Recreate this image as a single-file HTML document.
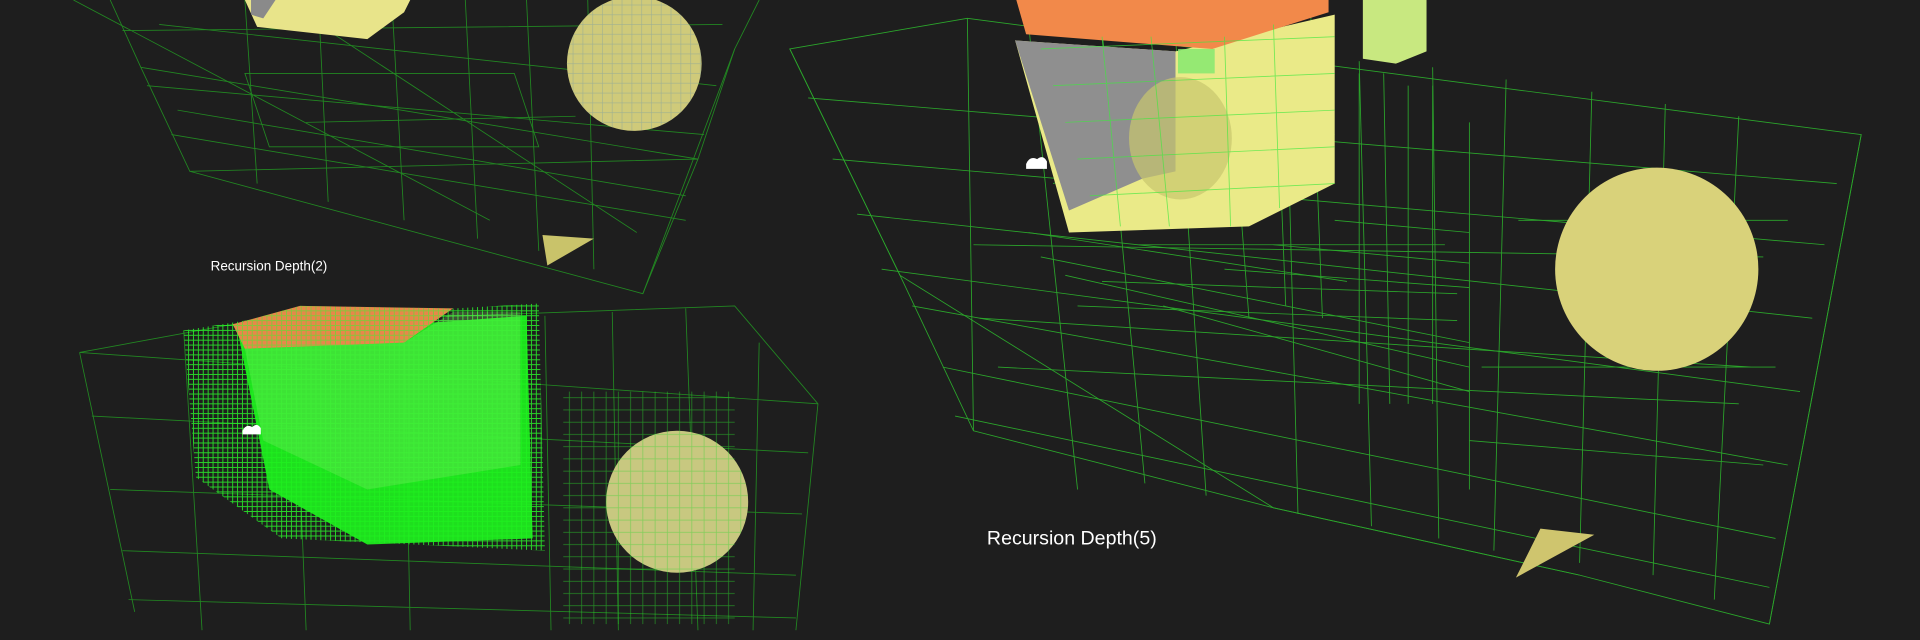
<!DOCTYPE html>
<html><head><meta charset="utf-8"><style>
html,body{margin:0;padding:0;background:#1e1e1e;width:1920px;height:640px;overflow:hidden}
svg{display:block}
text{font-family:"Liberation Sans",sans-serif;fill:#fff}
</style></head><body>
<svg width="1920" height="640" viewBox="0 0 1568 523" preserveAspectRatio="none" xmlns="http://www.w3.org/2000/svg">
<defs>
<pattern id="hz" width="4" height="4" patternUnits="userSpaceOnUse"><path d="M0 2H4M2 0V4" stroke="#2bff2b" stroke-width="0.8"/></pattern>
<pattern id="hz2" width="10" height="10" patternUnits="userSpaceOnUse"><path d="M0 5H10M5 0V10" stroke="#2bd42b" stroke-width="0.6"/></pattern>
<pattern id="hz3" width="8" height="8" patternUnits="userSpaceOnUse"><path d="M0 4H8M4 0V8" stroke="#7fa0a0" stroke-width="0.5"/></pattern>
</defs>
<rect width="1568" height="523" fill="#1e1e1e"/>

<!-- TOP LEFT -->
<g stroke="#239a23" stroke-width="0.7" fill="none" opacity="0.85">
<path d="M90 0 L115 55 L155 140 L525 240 L600 40 L620 0"/>
<path d="M115 55 L570 130 L600 40 M155 140 L570 130 M570 130 L525 240"/>
<path d="M130 20 L585 70 M145 90 L560 160 M200 0 L210 150 M260 0 L268 165 M320 0 L330 180 M380 0 L390 195 M430 0 L440 205 M480 0 L485 220"/>
<path d="M100 25 L590 20 M120 70 L575 110 M140 110 L560 180 M230 0 L520 190 M60 0 L400 180"/>
<path d="M200 60 L420 60 L440 120 L220 120 Z M250 100 L470 95"/>
</g>
<polygon points="200,0 335,0 330,10 300,32 210,22" fill="#e8e48a"/>
<polygon points="205,0 225,0 215,15 205,12" fill="#8a8a8a"/>
<circle cx="518" cy="52" r="55" fill="#cfca7a"/>
<circle cx="518" cy="52" r="55" fill="url(#hz3)" opacity="0.6"/>
<polygon points="443,192 485,195 447,217" fill="#c9c36a"/>
<text x="172" y="221" font-size="11">Recursion Depth(2)</text>

<!-- BOTTOM LEFT -->
<g stroke="#239a23" stroke-width="0.7" fill="none" opacity="0.85">
<path d="M65 288 L190 265 L600 250 L668 330 L650 515 M65 288 L110 500 M65 288 L668 330"/>
<path d="M75 340 L660 370 M90 400 L655 420 M100 450 L650 470 M105 490 L650 505"/>
<path d="M150 270 L165 515 M240 265 L250 515 M330 262 L335 515 M445 258 L450 515 M500 255 L505 515 M560 252 L570 515 M620 280 L615 515"/>
</g>
<polygon points="150,270 200,262 440,248 445,450 230,440 160,390" fill="url(#hz)" opacity="0.8"/>
<polygon points="195,275 430,258 435,440 300,445 220,400" fill="#1ef01e" opacity="0.92"/>
<polygon points="190,265 245,250 370,252 330,280 200,285" fill="#e8874a"/>
<polygon points="190,265 245,250 370,252 330,280 200,285" fill="url(#hz)" opacity="0.5"/>
<polygon points="200,285 330,280 370,255 425,255 425,380 300,400 215,360" fill="#9cf07a" opacity="0.25"/>
<rect x="460" y="320" width="140" height="190" fill="url(#hz2)" opacity="0.6"/>
<circle cx="553" cy="410" r="58" fill="#c8c880"/>
<circle cx="553" cy="410" r="58" fill="url(#hz2)" opacity="0.45"/>
<path d="M198 352 q3 -6 8 -3 q4 -4 7 1 l0 5 l-15 0z" fill="#fff"/>

<!-- RIGHT -->
<g stroke="#2fc82f" stroke-width="0.7" fill="none" opacity="0.8">
<path d="M645 40 L790 15 L1520 110 L1445 510 L1290 470 L1040 415 L735 225 Z"/>
<path d="M645 40 L735 225 M790 15 L795 352 M1520 110 L1445 510"/>
<path d="M735 225 L795 352 L1040 415 M1040 415 L1290 470"/>
<path d="M660 80 L1500 150 M680 130 L1490 200 M700 175 L1480 260 M720 220 L1470 320 M745 250 L1460 380 M770 300 L1450 440 M780 340 L1445 480"/>
<path d="M840 20 L880 400 M900 25 L935 395 M960 30 L985 405 M1050 40 L1060 420 M1110 50 L1120 430 M1170 55 L1175 440 M1230 65 L1220 450 M1300 75 L1290 460 M1360 85 L1350 470 M1420 95 L1400 490"/>
<path d="M795 200 L1440 210 M800 260 L1430 300 M815 300 L1420 330 M1200 100 L1200 400 M1240 180 L1460 180 M1210 300 L1450 300 M1200 360 L1440 380"/>
<path d="M1110 60 L1110 330 M1130 60 L1135 330 M1150 70 L1150 330 M1170 70 L1170 330 M1090 180 L1200 190 M1040 200 L1200 215 M1000 220 L1200 235"/>
<path d="M1000 0 L1020 260 M1040 0 L1050 250 M1070 0 L1080 260 M930 200 L1180 200 M900 230 L1190 240 M880 250 L1190 262"/>
<path d="M850 210 L1200 280 M870 225 L1200 300 M840 190 L1100 230 M950 250 L1200 320 M860 150 L1060 90 M880 180 L1090 110"/>
</g>
<polygon points="829,33 960,42 1090,12 1090,150 1020,185 873,190" fill="#eaea88"/>
<polygon points="829,33 960,42 960,140 933,146 873,172" fill="#8f8f8f"/>
<polygon points="830,0 1085,0 1085,10 990,40 838,28" fill="#f2894a"/>
<ellipse cx="964" cy="113" rx="42" ry="50" fill="#c8c66e" opacity="0.7"/>
<rect x="962" y="40" width="30" height="20" fill="#7fe86e" opacity="0.8"/>
<g stroke="#3fe83f" stroke-width="0.7" fill="none" opacity="0.7">
<path d="M850 40 L1090 30 M860 70 L1090 60 M870 100 L1090 90 M880 130 L1090 120 M890 160 L1090 150 M900 30 L915 185 M940 30 L955 185 M1000 30 L1005 185 M1040 20 L1045 170"/>
</g>
<polygon points="1113,0 1165,0 1165,42 1140,52 1113,48" fill="#c8e880"/>
<circle cx="1353" cy="220" r="83" fill="#d9d27a"/>
<polygon points="1238,472 1302,437 1258,432" fill="#cfc56e"/>
<path d="M838 134 q3 -7 9 -4 q5 -4 8 2 l0 6 l-17 0z" fill="#fff"/>
<text x="806" y="445" font-size="16">Recursion Depth(5)</text>
</svg>
</body></html>
